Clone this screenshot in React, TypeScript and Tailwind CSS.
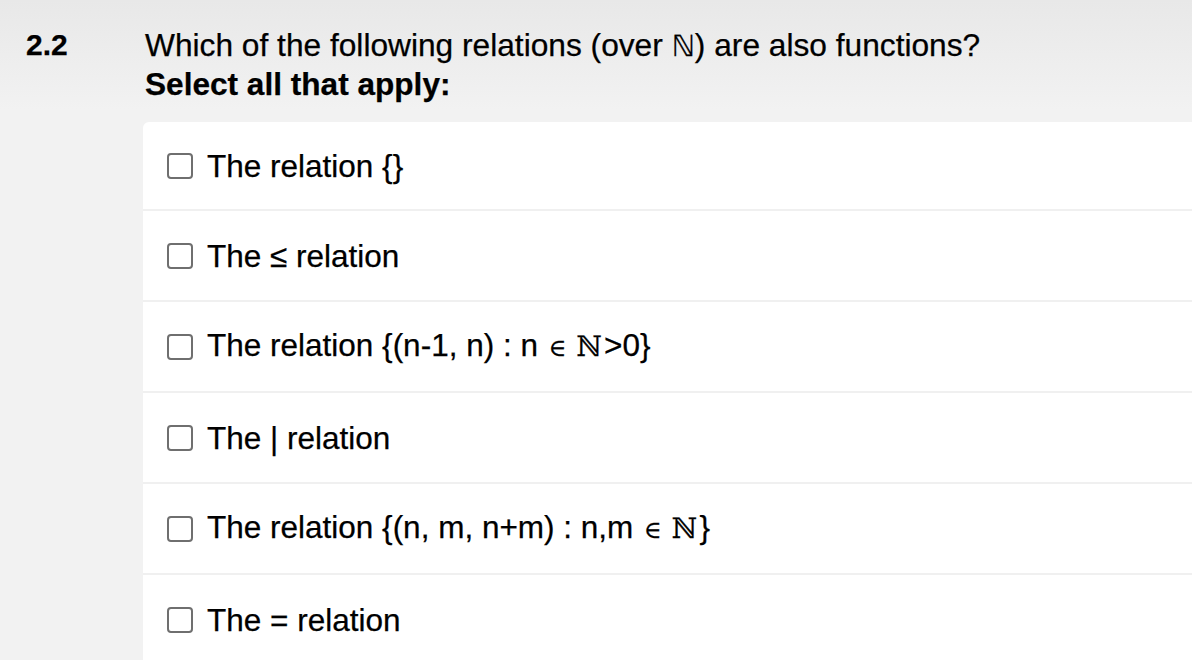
import React from "react";

const Math: React.FC = () => (
  <span style={{ fontFamily: '"DejaVu Serif", "Liberation Serif", serif' }}>
    <span className="text-[24px] ml-[2px]">∈</span>
    <span className="text-[28px] ml-[10px] mr-[2px]">ℕ</span>
  </span>
);

const Box = () => (
  <span className="inline-block w-[26px] h-[26px] shrink-0 rounded-[4px] border-2 border-[#6f6f6f] bg-white" />
);

const options: React.ReactNode[] = [
  <>The relation {"{}"}</>,
  <>The ≤ relation</>,
  <>
    The relation {"{(n-1, n) : n "}
    <Math />
    {">0}"}
  </>,
  <>The | relation</>,
  <>
    The relation {"{(n, m, n+m) : n,m "}
    <Math />
    {"}"}
  </>,
  <>The = relation</>,
];

export default function App() {
  return (
    <div
      className="w-[1192px] h-[660px] overflow-hidden bg-gradient-to-b from-[#e8e8e8] to-[#f2f2f2] bg-[length:100%_110px] bg-no-repeat text-black [-webkit-text-stroke:0.25px_black]"
      style={{ fontFamily: '"Liberation Sans", Arial, sans-serif', backgroundColor: "#f2f2f2" }}
    >
      <div className="flex pt-[26px]">
        <div className="w-[143px] shrink-0 pl-[26px] text-[30px] font-bold leading-[38px]">2.2</div>
        <div className="flex-1 min-w-0">
          <div className="pl-[2px] text-[31.7px] leading-[38px] whitespace-nowrap">
            Which of the following relations (over{" "}
            <span style={{ fontFamily: '"DejaVu Sans", sans-serif' }} className="text-[29px]">ℕ</span>) are also functions?
          </div>
          <div className="pl-[2px] text-[31.6px] leading-[38px] font-bold">Select all that apply:</div>
          <div className="mt-[19px] w-[1100px] bg-white rounded-tl-[6px]">
            {options.map((o, i) => (
              <div
                key={i}
                className={`flex items-center gap-[14px] pl-[24px] border-b-2 border-[#f0f0f0] ${i === 0 ? "h-[89px]" : "h-[91px]"}`}
              >
                <Box />
                <span className="text-[31.5px] leading-[38px] whitespace-nowrap">{o}</span>
              </div>
            ))}
          </div>
        </div>
      </div>
    </div>
  );
}
